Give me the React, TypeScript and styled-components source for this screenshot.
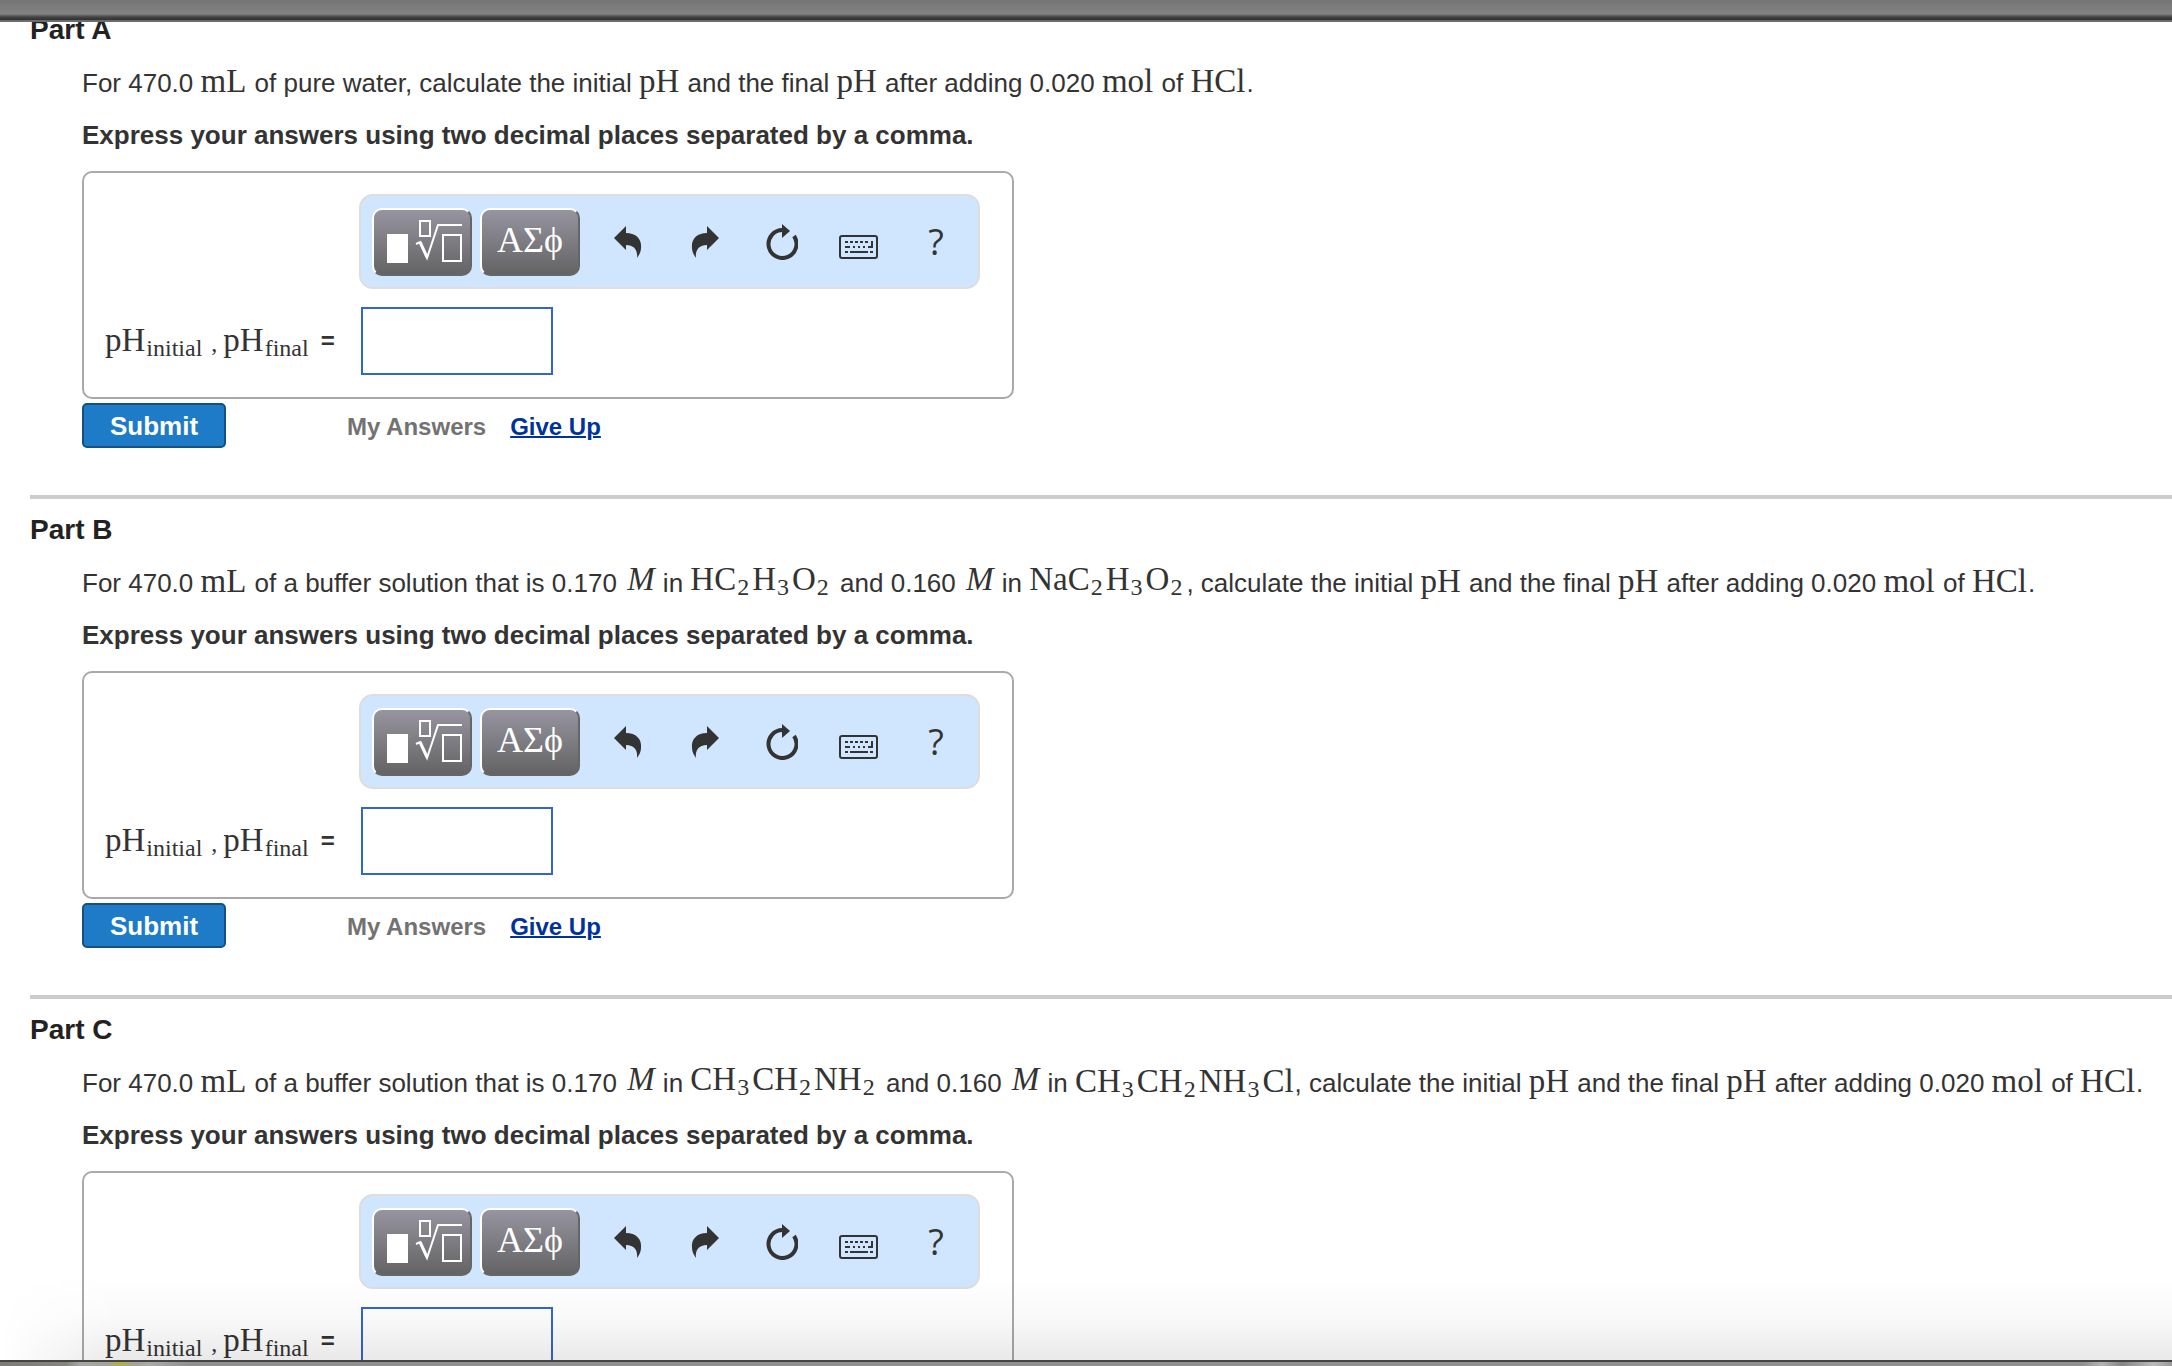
import React from "react";
import styled, { createGlobalStyle } from "styled-components";

const GlobalStyle = createGlobalStyle`
  * { box-sizing: border-box; }
  body {
    margin: 0;
    background: #fff;
    color: #333;
    font-family: "Liberation Sans", Arial, sans-serif;
    font-size: 26px;
  }
`;

const Page = styled.div`
  position: relative;
  display: flex;
  flex-direction: column;
  height: 100vh;
  overflow: hidden;
`;

const TopEdge = styled.div`
  flex: none;
  height: 22px;
  background: linear-gradient(#757575 0, #838383 14px, #6a6a6a 15px, #444 17px, #303030 20px, #6c6c6c 20px);
`;

const Content = styled.main`
  flex: 1;
  min-height: 0;
  overflow: hidden;
  padding-left: 30px;
`;

const BottomEdge = styled.div`
  flex: none;
  height: 6px;
  border-top: 2px solid #444;
  background: linear-gradient(90deg, #7d7d76 0, #85857e 66px, #a6a6a6 80px, #a3a39a 106px, #b0ae4c 120px,
    #a3a39a 136px, #aaa 150px, #8f8f8f 190px, #8f8f8f calc(100% - 90px), #b4b4b4 calc(100% - 70px),
    #858585 calc(100% - 50px), #bbb calc(100% - 18px), #999 100%);
`;

const Shade = styled.div`
  position: absolute;
  left: 0;
  right: 0;
  bottom: 6px;
  height: 84px;
  pointer-events: none;
  background: linear-gradient(rgba(0, 0, 0, 0), rgba(0, 0, 0, 0.025) 50%, rgba(0, 0, 0, 0.085));
  mask-image: linear-gradient(90deg, transparent, #000 120px);
`;

const PartSection = styled.section<{ $first?: boolean }>`
  height: ${(p) => (p.$first ? 482 : 500)}px;
  border-top: ${(p) => (p.$first ? "none" : "4px solid #ccc")};
  padding-top: ${(p) => (p.$first ? 0 : 14)}px;
  margin-top: ${(p) => (p.$first ? -9 : 0)}px;
`;

const Title = styled.h2`
  margin: 0;
  color: #222;
  font-size: 28px;
  line-height: 34px;
`;

const Body = styled.div`
  padding-left: 52px;
`;

const Statement = styled.p`
  margin: 16px 0 0;
  line-height: 40px;
  white-space: nowrap;
`;

const Instruction = styled.p`
  margin: 14px 0 0;
  font-weight: bold;
  line-height: 36px;
`;

const MathText = styled.span<{ $raised?: boolean; $italic?: boolean }>`
  margin: 0 1px 0 ${(p) => (p.$italic ? 3 : 0)}px;
  font-family: "Liberation Serif", "Times New Roman", serif;
  font-size: 33px;
  font-style: ${(p) => (p.$italic ? "italic" : "normal")};
  line-height: 1;
  vertical-align: ${(p) => (p.$raised ? "2px" : "baseline")};

  sub {
    margin: 0 3px 0 1px;
    font-size: 24px;
    line-height: 0;
    vertical-align: -5px;
  }
`;

const Separator = styled.span`
  font-size: 24px;
`;

const AnswerBox = styled.div`
  display: grid;
  grid-template-columns: 258px 621px;
  column-gap: 17px;
  row-gap: 18px;
  width: 932px;
  height: 228px;
  margin-top: 18px;
  padding: 21px 0 0;
  border: 2px solid #a9a9a9;
  border-radius: 10px;
  align-content: start;
`;

const Toolbar = styled.div`
  grid-column: 2;
  display: flex;
  align-items: center;
  gap: 18px;
  height: 95px;
  padding: 0 0 0 11px;
  border: 2px solid #ddd;
  border-radius: 14px;
  background: #d0e5fe;
`;

const Palettes = styled.div`
  display: flex;
  gap: 8px;
`;

const Tools = styled.div`
  display: flex;
  gap: 17px;
`;

const PaletteButton = styled.button`
  display: flex;
  align-items: center;
  justify-content: center;
  width: 100px;
  height: 68px;
  padding: 0 0 4px;
  border: 2px solid;
  border-color: #fff #666 #666 #fff;
  border-radius: 10px;
  background: linear-gradient(#9896a2, #626262) border-box;
  color: #fff;
  font-family: "Liberation Serif", serif;
  font-size: 36px;
  line-height: 40px;
`;

const ToolButton = styled.button`
  display: flex;
  align-items: center;
  justify-content: center;
  width: 60px;
  height: 60px;
  padding: 0;
  border: 0;
  background: none;
  color: #333;
  font-family: "Open Sans", "Noto Sans", sans-serif;
  font-size: 36px;
`;

const AnswerLabel = styled.label`
  justify-self: start;
  align-self: center;
  padding-left: 21px;
  white-space: nowrap;
`;

const Equals = styled.span`
  margin-left: 8px;
  font-size: 24px;
  font-weight: bold;
  vertical-align: 2px;
`;

const AnswerInput = styled.input`
  width: 192px;
  height: 68px;
  margin-left: 2px;
  padding: 0 10px;
  border: 2px solid #36c;
  outline: 0;
  background: transparent;
  font: inherit;
`;

const Actions = styled.div`
  display: flex;
  align-items: center;
  margin-top: 4px;
  font-size: 24px;
  font-weight: bold;
`;

const Submit = styled.button`
  width: 144px;
  height: 45px;
  padding: 2px 0 0;
  border: 2px solid #15507f;
  border-radius: 5px;
  background: #1d7bc8;
  color: #fff;
  font: bold 26px "Liberation Sans", Arial, sans-serif;
`;

const MyAnswers = styled.span`
  margin-left: 121px;
  padding-top: 2px;
  color: #727272;
`;

const GiveUp = styled.a`
  margin-left: 24px;
  padding-top: 2px;
  color: #039;
  text-decoration-thickness: 2px;
`;

const TemplateIcon = () => (
  <svg width="80" height="48" viewBox="-4 0 80 48" fill="none" stroke="#fff" aria-hidden="true">
    <path d="M1 18h21v29H1z" fill="#fff" stroke="none" />
    <path d="M34 5h10v15H34z" strokeWidth="2" />
    <path d="M57 19h18v26H57z" strokeWidth="2" />
    <path d="M30 28l4-2 7 16L52 9h24" strokeWidth="2" />
    <path d="M34 26l7 15" strokeWidth="3" />
  </svg>
);

const UndoIcon = () => (
  <svg width="28" height="32" viewBox="0 0 28 32" fill="#333" aria-hidden="true">
    <path d="M0 12L12 0v7C22 7 28 13 27 22c0 4-2 7-4 10 1-8-3-13-11-13v5z" />
  </svg>
);

const RedoIcon = () => (
  <svg width="28" height="32" viewBox="0 0 28 32" fill="#333" aria-hidden="true">
    <path d="M28 12L16 0v7C6 7 0 13 1 22c0 4 2 7 4 10-1-8 3-13 11-13v5z" />
  </svg>
);

const ResetIcon = () => (
  <svg width="32" height="36" viewBox="0 0 32 36" fill="none" aria-hidden="true">
    <path d="M17 6a14 14 0 1 0 11 6" stroke="#333" strokeWidth="4" />
    <path d="M16 0l8 7-8 7z" fill="#333" />
  </svg>
);

const KeyboardIcon = () => (
  <svg width="40" height="34" viewBox="0 -10 40 34" fill="none" stroke="#333" aria-hidden="true">
    <rect x="1" y="1" width="37" height="22" rx="2" strokeWidth="2" />
    <g fill="#333" stroke="none">
      <path d="M6 6h3v2H6zM11 6h3v2h-3zM16 6h3v2h-3zM21 6h3v2h-3zM26 6h3v2h-3z" />
      <path d="M6 11h5v2H6zM14 11h2v2h-2zM19 11h2v2h-2zM24 11h2v2h-2zM29 11h3V6h2v7h-5z" />
      <path d="M6 16h3v2H6zM11 16h18v2H11zM31 16h3v2h-3z" />
    </g>
  </svg>
);

const tools = [
  { label: "Undo", icon: <UndoIcon /> },
  { label: "Redo", icon: <RedoIcon /> },
  { label: "Reset", icon: <ResetIcon /> },
  { label: "Keyboard shortcuts", icon: <KeyboardIcon /> },
  { label: "Help", icon: "?" },
];

const M = ({ children }: { children: React.ReactNode }) => <MathText>{children}</MathText>;

const Molar = () => (
  <MathText $raised $italic>
    M
  </MathText>
);

const PhChange = () => (
  <>
    calculate the initial <M>pH</M> and the final <M>pH</M> after adding 0.020 <M>mol</M> of <M>HCl</M>.
  </>
);

interface PartProps {
  name: string;
  first?: boolean;
  children: React.ReactNode;
}

const Part = ({ name, first, children }: PartProps) => (
  <PartSection $first={first}>
    <Title>Part {name}</Title>
    <Body>
      <Statement>{children}</Statement>
      <Instruction>Express your answers using two decimal places separated by a comma.</Instruction>
      <AnswerBox>
        <Toolbar>
          <Palettes>
            <PaletteButton type="button" aria-label="Templates">
              <TemplateIcon />
            </PaletteButton>
            <PaletteButton type="button">ΑΣϕ</PaletteButton>
          </Palettes>
          <Tools>
            {tools.map((tool) => (
              <ToolButton key={tool.label} type="button" aria-label={tool.label}>
                {tool.icon}
              </ToolButton>
            ))}
          </Tools>
        </Toolbar>
        <AnswerLabel htmlFor={`answer-${name}`}>
          <MathText>
            pH<sub>initial</sub>
            <Separator> , </Separator>
            pH<sub>final</sub>
          </MathText>
          <Equals>=</Equals>
        </AnswerLabel>
        <AnswerInput id={`answer-${name}`} type="text" />
      </AnswerBox>
      <Actions>
        <Submit type="button">Submit</Submit>
        <MyAnswers>My Answers</MyAnswers>
        <GiveUp href="#">Give Up</GiveUp>
      </Actions>
    </Body>
  </PartSection>
);

export default function App() {
  return (
    <Page>
      <GlobalStyle />
      <TopEdge />
      <Content>
        <Part name="A" first>
          For 470.0 <M>mL</M> of pure water, <PhChange />
        </Part>
        <Part name="B">
          For 470.0 <M>mL</M> of a buffer solution that is 0.170 <Molar /> in{" "}
          <MathText $raised>
            HC<sub>2</sub>H<sub>3</sub>O<sub>2</sub>
          </MathText>{" "}
          and 0.160 <Molar /> in{" "}
          <MathText $raised>
            NaC<sub>2</sub>H<sub>3</sub>O<sub>2</sub>
          </MathText>
          , <PhChange />
        </Part>
        <Part name="C">
          For 470.0 <M>mL</M> of a buffer solution that is 0.170 <Molar /> in{" "}
          <MathText $raised>
            CH<sub>3</sub>CH<sub>2</sub>NH<sub>2</sub>
          </MathText>{" "}
          and 0.160 <Molar /> in{" "}
          <MathText>
            CH<sub>3</sub>CH<sub>2</sub>NH<sub>3</sub>Cl
          </MathText>
          , <PhChange />
        </Part>
      </Content>
      <BottomEdge />
      <Shade />
    </Page>
  );
}
